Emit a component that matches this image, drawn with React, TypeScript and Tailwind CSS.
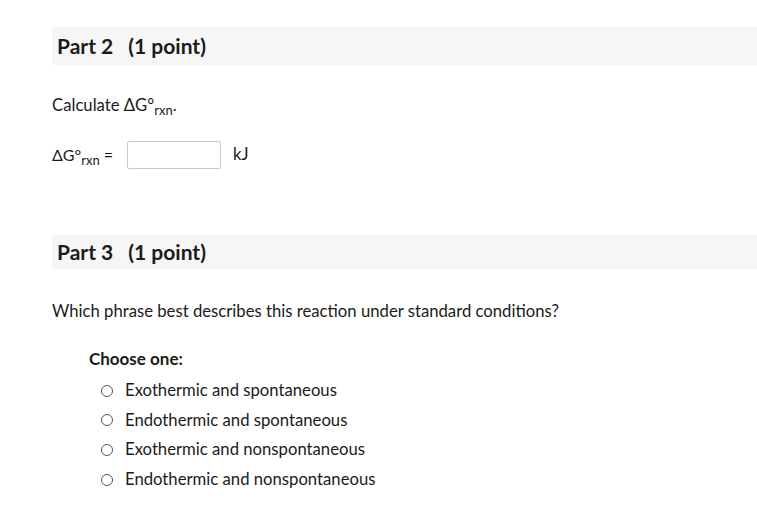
import React from "react";

const options = [
  "Exothermic and spontaneous",
  "Endothermic and spontaneous",
  "Exothermic and nonspontaneous",
  "Endothermic and nonspontaneous",
];

function Radio() {
  return (
    <span className="inline-block w-[12px] h-[12px] rounded-full border border-[#555] bg-white mr-[12px] shrink-0" />
  );
}

function Rxn() {
  return <span className="relative top-[4px] text-[13px] leading-none">rxn</span>;
}

export default function App() {
  return (
    <div
      className="w-[757px] h-[529px] bg-white text-[#1b1b1b] overflow-hidden pt-[27px] pl-[52px]"
      style={{ fontFamily: "Lato, 'Open Sans', sans-serif" }}
    >
      <div className="h-[38px] bg-[#f6f6f6] flex items-center pl-[5px]">
        <span className="text-[21px] font-bold">Part 2</span>
        <span className="text-[21px] font-bold ml-[15px]">(1 point)</span>
      </div>

      <div className="mt-[29px] text-[16.7px] leading-[22px] h-[22px]">
        Calculate ΔG°<Rxn />.
      </div>

      <div className="mt-[25px] flex items-center h-[28px]">
        <span className="text-[16px] leading-[22px]">
          ΔG°<Rxn /> =
        </span>
        <div className="ml-[14px] w-[94px] h-[28px] border border-[#c8c8c8] rounded-[2px] bg-white" />
        <span className="ml-[12px] text-[16.7px]">kJ</span>
      </div>

      <div className="mt-[65px] h-[36px] bg-[#f6f6f6] flex items-center pl-[5px]">
        <span className="text-[21px] font-bold">Part 3</span>
        <span className="text-[21px] font-bold ml-[15px]">(1 point)</span>
      </div>

      <div className="mt-[30px] text-[16.7px] leading-[22px]">
        Which phrase best describes this reaction under standard conditions?
      </div>

      <div className="mt-[26px] ml-[37px] text-[17px] font-bold leading-[22px]">
        Choose one:
      </div>

      <div className="ml-[49px] mt-[6px] flex flex-col">
        {options.map((o) => (
          <label key={o} className="flex items-center h-[29.6px] text-[16.7px]">
            <Radio />
            <span>{o}</span>
          </label>
        ))}
      </div>
    </div>
  );
}
